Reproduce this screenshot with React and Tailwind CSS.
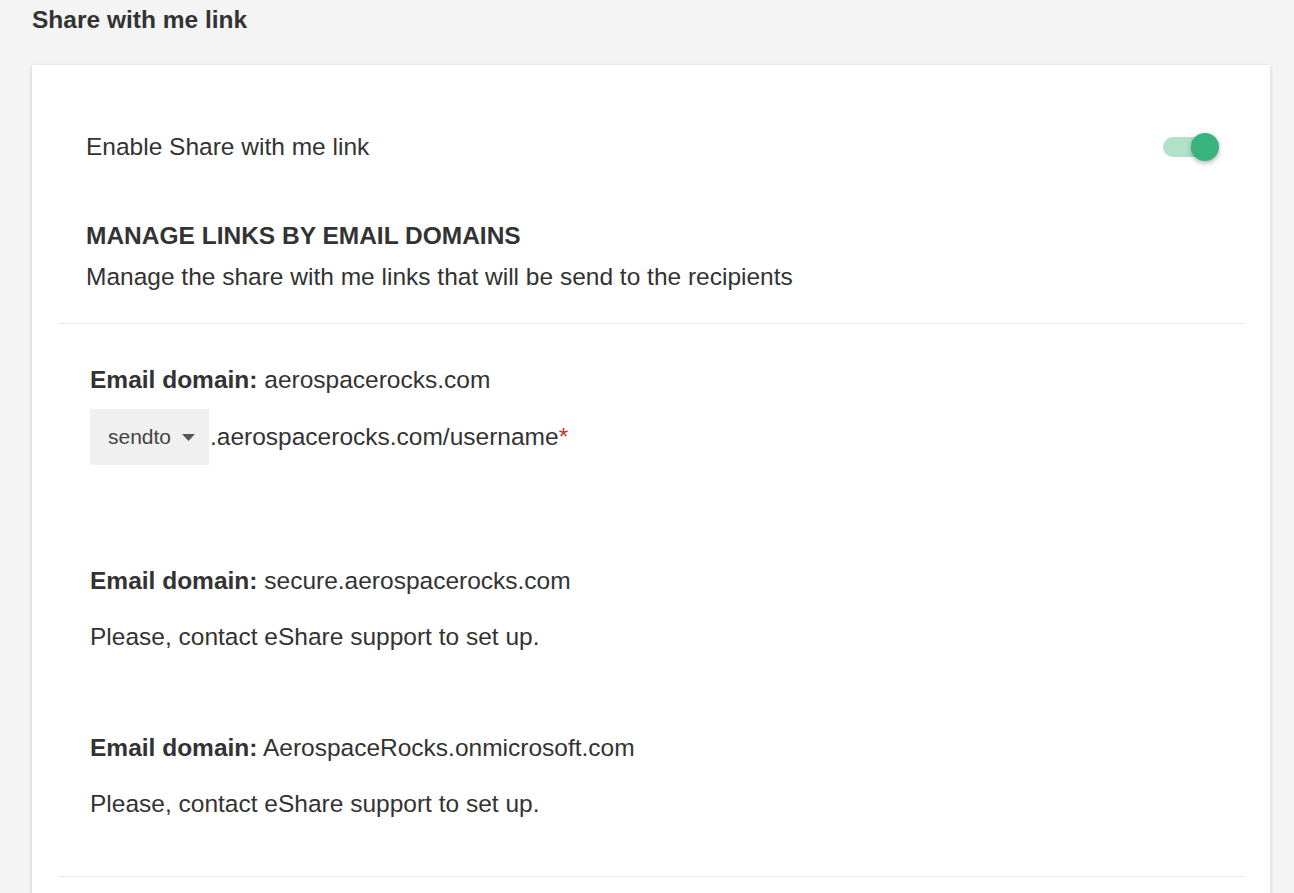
import { useState } from "react";

const domains = [
  { name: "aerospacerocks.com", editable: true },
  { name: "secure.aerospacerocks.com" },
  { name: "AerospaceRocks.onmicrosoft.com" },
];

function Toggle({ on, onChange }) {
  return (
    <button
      type="button"
      onClick={() => onChange(!on)}
      className="relative h-[28px] w-[56px] shrink-0"
    >
      <span
        className={`absolute left-0 top-[4px] h-[20px] w-[48px] rounded-full ${on ? "bg-[#b1e1c9]" : "bg-[#d6d6d6]"}`}
      />
      <span
        className={`absolute top-0 h-[28px] w-[28px] rounded-full shadow-[0_2px_5px_rgba(0,0,0,0.3)] ${on ? "left-[28px] bg-[#38b37e]" : "left-0 bg-[#fafafa]"}`}
      />
    </button>
  );
}

function DomainBlock({ domain, index, prevEditable }) {
  // espacement : premier bloc sous le séparateur, sinon selon le bloc précédent
  const mt = index === 0 ? "mt-[44px]" : prevEditable ? "mt-[104px]" : "mt-[87px]";
  return (
    <div className={mt}>
      <p className="leading-[24px]">
        <span className="font-bold">Email domain:</span> {domain.name}
      </p>
      {domain.editable ? (
        <div className="mt-[17px] flex items-center">
          <button className="flex h-[56px] w-[119px] items-center gap-[11px] bg-[#f0f0f0] pl-[18px] text-[21px] text-[#444]">
            sendto
            <svg width="13" height="7" viewBox="0 0 13 7">
              <path d="M0 0h13L6.5 7z" fill="#555" />
            </svg>
          </button>
          <span className="ml-[1px] leading-[24px]">
            .{domain.name}/username<span className="text-[#c0392b]">*</span>
          </span>
        </div>
      ) : (
        <p className="mt-[32px] leading-[24px]">Please, contact eShare support to set up.</p>
      )}
    </div>
  );
}

export default function App() {
  const [enabled, setEnabled] = useState(true);

  return (
    <div className="min-h-screen bg-[#f4f4f4] pl-[32px] pr-[24px] pt-[8px] font-['Liberation_Sans',Arial,sans-serif] text-[24.5px] text-[#333]">
      <h1 className="text-[24.5px] font-bold leading-[24px]">Share with me link</h1>

      {/* Carte principale */}
      <div className="mt-[33px] bg-white pb-[40px] pt-[68px] shadow-[0_1px_4px_rgba(0,0,0,0.18)]">
        <div className="flex items-center justify-between pl-[54px] pr-[51px]">
          <span className="leading-[24px]">Enable Share with me link</span>
          <Toggle on={enabled} onChange={setEnabled} />
        </div>

        <div className="pl-[54px]">
          <h2 className="mt-[63px] font-bold leading-[24px]">MANAGE LINKS BY EMAIL DOMAINS</h2>
          <p className="mt-[17px] leading-[24px]">
            Manage the share with me links that will be send to the recipients
          </p>
        </div>

        <div className="mx-[26px] mt-[34px] border-t border-[#e6e6e6]">
          <div className="px-[32px]">
            {domains.map((d, i) => (
              <DomainBlock
                key={d.name}
                domain={d}
                index={i}
                prevEditable={i > 0 && domains[i - 1].editable}
              />
            ))}
          </div>
          <div className="mt-[60px] border-t border-[#e6e6e6]" />
        </div>
      </div>
    </div>
  );
}
